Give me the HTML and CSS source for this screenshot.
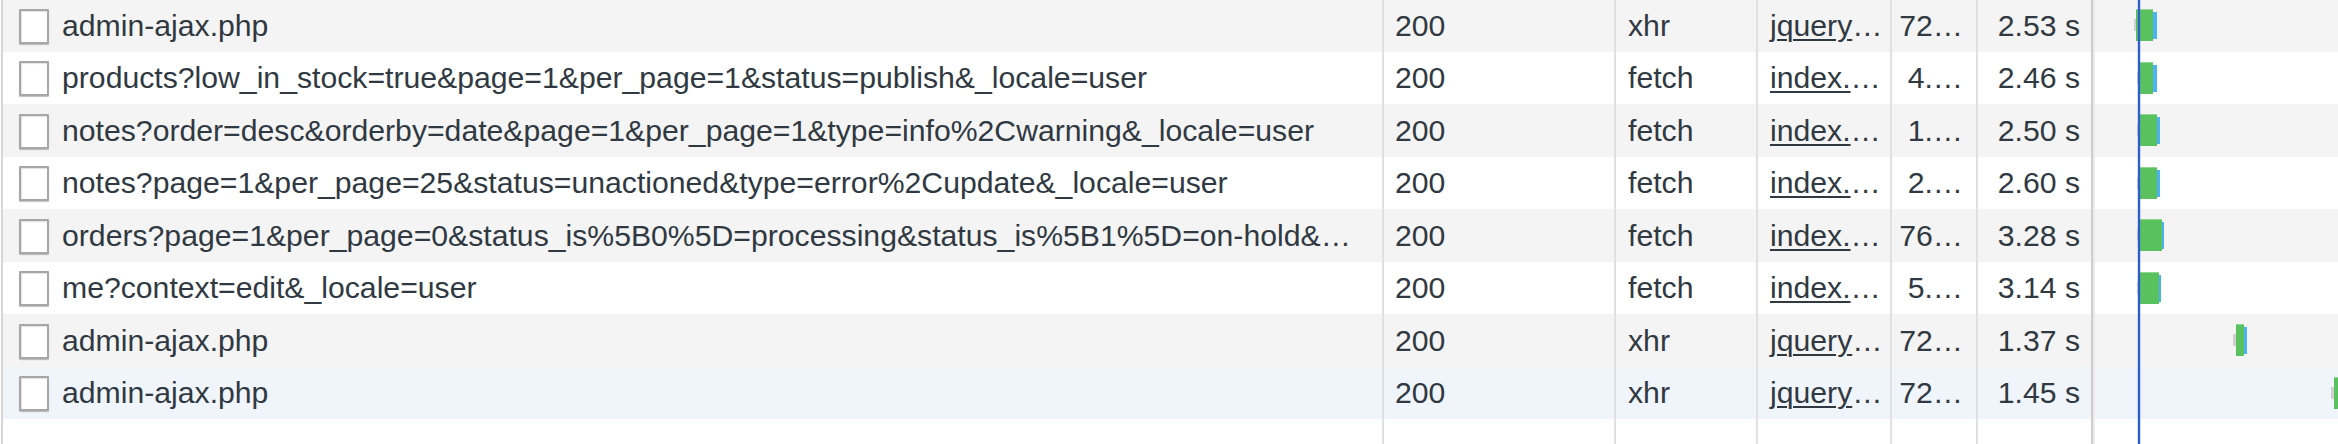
FILE: index.html
```html
<!DOCTYPE html>
<html>
<head>
<meta charset="utf-8">
<link rel="stylesheet" href="styles.css">
</head>
<body>
<div class="net">
  <div class="row odd">
    <div class="c name"><span class="ico"></span><span class="txt">admin-ajax.php</span></div>
    <div class="c status">200</div>
    <div class="c type">xhr</div>
    <div class="c init"><span class="u">jquery</span>…</div>
    <div class="c size">72…</div>
    <div class="c time">2.53 s</div>
    <div class="c wf"><i class="stub" style="left:39px"></i><i class="g" style="left:41px;width:17px"></i><i class="b" style="left:58px;width:4px"></i></div>
  </div>
  <div class="row">
    <div class="c name"><span class="ico"></span><span class="txt">products?low_in_stock=true&amp;page=1&amp;per_page=1&amp;status=publish&amp;_locale=user</span></div>
    <div class="c status">200</div>
    <div class="c type">fetch</div>
    <div class="c init"><span class="u">index.</span>…</div>
    <div class="c size">4.…</div>
    <div class="c time">2.46 s</div>
    <div class="c wf"><i class="stub" style="left:42px"></i><i class="g" style="left:45px;width:13px"></i><i class="b" style="left:58px;width:4px"></i></div>
  </div>
  <div class="row odd">
    <div class="c name"><span class="ico"></span><span class="txt">notes?order=desc&amp;orderby=date&amp;page=1&amp;per_page=1&amp;type=info%2Cwarning&amp;_locale=user</span></div>
    <div class="c status">200</div>
    <div class="c type">fetch</div>
    <div class="c init"><span class="u">index.</span>…</div>
    <div class="c size">1.…</div>
    <div class="c time">2.50 s</div>
    <div class="c wf"><i class="stub" style="left:42px"></i><i class="g" style="left:45px;width:17px"></i><i class="b" style="left:62px;width:3px"></i></div>
  </div>
  <div class="row">
    <div class="c name"><span class="ico"></span><span class="txt">notes?page=1&amp;per_page=25&amp;status=unactioned&amp;type=error%2Cupdate&amp;_locale=user</span></div>
    <div class="c status">200</div>
    <div class="c type">fetch</div>
    <div class="c init"><span class="u">index.</span>…</div>
    <div class="c size">2.…</div>
    <div class="c time">2.60 s</div>
    <div class="c wf"><i class="stub" style="left:42px"></i><i class="g" style="left:45px;width:17px"></i><i class="b" style="left:62px;width:3px"></i></div>
  </div>
  <div class="row odd">
    <div class="c name"><span class="ico"></span><span class="txt">orders?page=1&amp;per_page=0&amp;status_is%5B0%5D=processing&amp;status_is%5B1%5D=on-hold&amp;…</span></div>
    <div class="c status">200</div>
    <div class="c type">fetch</div>
    <div class="c init"><span class="u">index.</span>…</div>
    <div class="c size">76…</div>
    <div class="c time">3.28 s</div>
    <div class="c wf"><i class="stub" style="left:42px"></i><i class="g" style="left:45px;width:22px"></i><i class="b" style="left:67px;width:2px"></i></div>
  </div>
  <div class="row">
    <div class="c name"><span class="ico"></span><span class="txt">me?context=edit&amp;_locale=user</span></div>
    <div class="c status">200</div>
    <div class="c type">fetch</div>
    <div class="c init"><span class="u">index.</span>…</div>
    <div class="c size">5.…</div>
    <div class="c time">3.14 s</div>
    <div class="c wf"><i class="stub" style="left:42px"></i><i class="g" style="left:45px;width:19px"></i><i class="b" style="left:64px;width:2px"></i></div>
  </div>
  <div class="row odd">
    <div class="c name"><span class="ico"></span><span class="txt">admin-ajax.php</span></div>
    <div class="c status">200</div>
    <div class="c type">xhr</div>
    <div class="c init"><span class="u">jquery</span>…</div>
    <div class="c size">72…</div>
    <div class="c time">1.37 s</div>
    <div class="c wf"><i class="stub" style="left:138px"></i><i class="g" style="left:141px;width:8px"></i><i class="b" style="left:149px;width:3px"></i></div>
  </div>
  <div class="row hover">
    <div class="c name"><span class="ico"></span><span class="txt">admin-ajax.php</span></div>
    <div class="c status">200</div>
    <div class="c type">xhr</div>
    <div class="c init"><span class="u">jquery</span>…</div>
    <div class="c size">72…</div>
    <div class="c time">1.45 s</div>
    <div class="c wf"><i class="stub" style="left:236px"></i><i class="g" style="left:239px;width:10px"></i></div>
  </div>
  <div class="row filler">
    <div class="c name"></div>
    <div class="c status"></div>
    <div class="c type"></div>
    <div class="c init"></div>
    <div class="c size"></div>
    <div class="c time"></div>
    <div class="c wf"></div>
  </div>
  <div class="dcl"></div>
</div>
</body>
</html>
```

FILE: styles.css
```css
html, body {
  margin: 0;
  padding: 0;
  background: #ffffff;
  overflow: hidden;
}

body {
  width: 2338px;
  height: 444px;
  font-family: "Liberation Sans", Arial, Helvetica, sans-serif;
  font-size: 30.2px;
  color: #303942;
}

.net {
  position: relative;
  margin-top: -1px;
  margin-left: 1px;
  height: 445px;
  border-left: 2px solid #d6d6d6;
  display: flex;
  flex-direction: column;
  overflow: hidden;
}

.row {
  display: grid;
  grid-template-columns: 1381px 232px 142px 134px 86px 115px 245px;
  height: 52.5px;
  flex: none;
  background: #ffffff;
}

.row.odd {
  background: #f4f4f4;
}

.row.hover {
  background: #f0f4fb;
}

.row.filler {
  flex: 1;
  background: #ffffff;
}

.c {
  box-sizing: border-box;
  border-right: 2px solid #e0e0e0;
  display: flex;
  align-items: center;
  white-space: nowrap;
  padding: 0 12px;
  line-height: 1.3;
}

.name {
  padding-left: 16px;
  padding-right: 12px;
}

.ico {
  flex: none;
  box-sizing: border-box;
  width: 30px;
  height: 35px;
  margin-top: 2px;
  margin-right: 13px;
  background: #ffffff;
  border: 2px solid #a7a7a7;
  border-radius: 1px;
  box-shadow: inset 1px 1px 1px rgba(0, 0, 0, 0.12), 0 1px 1px rgba(0, 0, 0, 0.25);
}

.status {
  padding-left: 11px;
}

.size {
  justify-content: flex-end;
  padding-right: 13px;
}

.time {
  justify-content: flex-end;
  padding-right: 11px;
  border-right: 2px solid #cdcdcd;
}

.u {
  text-decoration: underline;
  text-decoration-thickness: 2px;
  text-underline-offset: 3px;
}

.wf {
  position: relative;
  border-right: none;
  border-left: 2px solid #ebebeb;
  padding: 0;
  overflow: hidden;
}

.wf i {
  position: absolute;
  display: block;
}

.wf .stub {
  top: 20px;
  height: 12px;
  width: 3px;
  background: #cfcfcf;
}

.wf .g {
  top: 10px;
  height: 32px;
  background: #5ac15f;
  box-shadow: inset 0 1px 0 #8fd691;
}

.wf .b {
  top: 13px;
  height: 27px;
  background: #4ab3f3;
}

.dcl {
  position: absolute;
  top: 0;
  bottom: 0;
  left: 2135px;
  width: 2px;
  background: #2b5fca;
  box-shadow: 0 0 0 0.5px rgba(90, 120, 220, 0.5);
}
```
